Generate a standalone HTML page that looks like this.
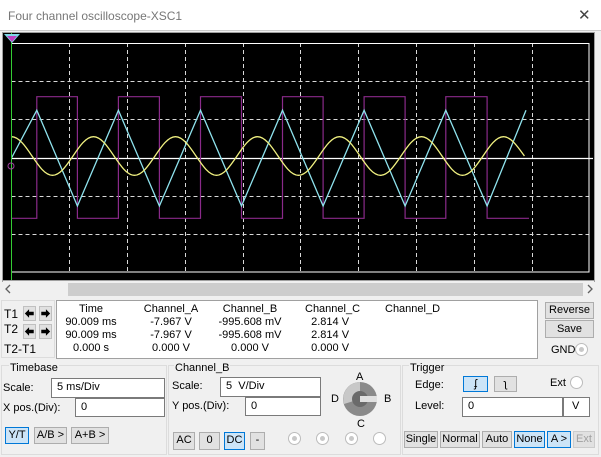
<!DOCTYPE html>
<html><head><meta charset="utf-8"><style>
*{margin:0;padding:0;box-sizing:border-box}
body{width:601px;height:457px;overflow:hidden;background:#f0f0f0;font-family:"Liberation Sans",sans-serif;font-size:11px;color:#000;position:relative}
.a{position:absolute;white-space:nowrap}
.in{position:absolute;background:#fff;border:1px solid #7a7a7a;padding:2px 0 0 5px;font-size:11px}
.bt{position:absolute;background:#e1e1e1;border:1px solid #adadad;text-align:center;font-size:11px;line-height:15px}
.bl{background:#cce4f7;border-color:#0078d7}
.grp{position:absolute;border:1px solid #dcdcdc}
.rd{position:absolute;width:13px;height:13px;border-radius:50%;border:1px solid #bcbcbc;background:#fff}
.rd.f::after{content:"";position:absolute;left:3px;top:3px;width:5px;height:5px;border-radius:50%;background:#c8c8c8}
.c{text-align:center}
.ar{position:absolute;background:#e1e1e1;border:1px solid #c0c0c0}
</style></head><body>
<div class="a" style="left:0;top:0;width:601px;height:31px;background:#fff;border-bottom:1px solid #ccc"></div>
<div class="a" style="left:8px;top:9px;font-size:12px;color:#777">Four channel oscilloscope-XSC1</div>
<div class="a" style="left:578px;top:6px;font-size:15px;color:#444">✕</div>
<svg class="a" style="left:0;top:31px" width="601" height="268" viewBox="0 31 601 268">
<rect x="2" y="32" width="593" height="250" fill="#a0a0a0"/>
<rect x="3" y="33" width="591" height="247" fill="#000"/>
<g stroke="#d8d8d8" stroke-width="1" stroke-dasharray="4,3">
<path d="M69.5,43V272M127.5,43V272M185.5,43V272M243.5,43V272M358.5,43V272M416.5,43V272M474.5,43V272M532.5,43V272"/>
<path d="M11.5,81.5H589M11.5,119.5H589M11.5,196.5H589M11.5,234.5H589"/>
<path d="M300.5,43V272"/>
</g>
<rect x="11.5" y="43.5" width="577.5" height="228.5" fill="none" stroke="#fff"/>
<path d="M11.5,158.5H593" stroke="#fff" stroke-width="1.2"/>
<path d="M11.5,218.3H36.8V96.7H77.4V218.3H118.4V96.7H159.4V218.3H200.5V96.7H241.5V218.3H282.5V96.7H323.1V218.3H364.1V96.7H405.1V218.3H445.8V96.7H487.1V218.3H529" fill="none" stroke="#8a2a8a" stroke-width="1.2"/>
<path d="M11.5,158L36.8,110.3L77.4,206L118.4,110.3L159.4,206L200.5,110.3L241.5,206L282.5,110.3L323.1,206L364.1,110.3L405.1,206L445.8,110.3L487.1,206L526,110.3" fill="none" stroke="#8fe3ee" stroke-width="1.3"/>
<path d="M11.5,136.7c14.9,0 26.1,38.6 41,38.6s26.1,-38.6 41,-38.6s26.1,38.6 41,38.6s26.1,-38.6 41,-38.6s26.1,38.6 41,38.6s26.1,-38.6 41,-38.6s26.1,38.6 41,38.6s26.1,-38.6 41,-38.6s26.1,38.6 41,38.6s26.1,-38.6 41,-38.6s26.1,38.6 41,38.6s26.1,-38.6 41,-38.6C511,136.7 518,147 524.4,156" fill="none" stroke="#f0f080" stroke-width="1.3"/>
<path d="M11.5,33V280" stroke="#3c3" stroke-width="1"/>
<path d="M4,34H20L12,43Z" fill="#7fd8e8"/><path d="M7,36H17L12,42Z" fill="#c040c0"/>
<circle cx="11" cy="166" r="3" fill="none" stroke="#a040a0"/>
<rect x="3" y="281" width="591" height="17" fill="#f0f0f0"/>
<rect x="68" y="283" width="515" height="13" fill="#cdcdcd"/>
<path d="M10,285l-4,4 4,4M588,285l4,4 -4,4" fill="none" stroke="#606060" stroke-width="1.3"/>
</svg>
<div class="grp" style="left:1px;top:300px;width:54px;height:58px"></div>
<div class="a" style="left:4px;top:307px;font-size:12px">T1</div>
<div class="a" style="left:4px;top:322px;font-size:12px">T2</div>
<div class="a" style="left:4px;top:342px;font-size:12px">T2-T1</div>
<svg class="ar" style="left:23px;top:306px" width="13" height="15" viewBox="0 0 13 15"><path d="M1,7.5L6,2.5V5.5H11.5V9.5H6V12.5Z" fill="#000"/></svg>
<svg class="ar" style="left:39px;top:306px" width="13" height="15" viewBox="0 0 13 15"><path d="M12,7.5L7,2.5V5.5H1.5V9.5H7V12.5Z" fill="#000"/></svg>
<svg class="ar" style="left:23px;top:324px" width="13" height="15" viewBox="0 0 13 15"><path d="M1,7.5L6,2.5V5.5H11.5V9.5H6V12.5Z" fill="#000"/></svg>
<svg class="ar" style="left:39px;top:324px" width="13" height="15" viewBox="0 0 13 15"><path d="M12,7.5L7,2.5V5.5H1.5V9.5H7V12.5Z" fill="#000"/></svg>
<div class="a" style="left:56px;top:300px;width:482px;height:59px;background:#fff;border:1px solid #a0a0a0"></div>
<div class="a c" style="left:56px;top:303px;width:70px;line-height:13px">Time<br>90.009 ms<br>90.009 ms<br>0.000 s</div>
<div class="a c" style="left:136px;top:303px;width:70px;line-height:13px">Channel_A<br>-7.967 V<br>-7.967 V<br>0.000 V</div>
<div class="a c" style="left:210px;top:303px;width:80px;line-height:13px">Channel_B<br>-995.608 mV<br>-995.608 mV<br>0.000 V</div>
<div class="a" style="left:305px;top:303px;line-height:13px">Channel_C<br>&nbsp;&nbsp;2.814 V<br>&nbsp;&nbsp;2.814 V<br>&nbsp;&nbsp;0.000 V</div>
<div class="a" style="left:385px;top:303px;line-height:13px">Channel_D</div>
<div class="bt" style="left:545px;top:302px;width:49px;height:17px">Reverse</div>
<div class="bt" style="left:545px;top:320px;width:49px;height:18px;line-height:16px">Save</div>
<div class="a" style="left:551px;top:344px">GND</div>
<div class="rd f" style="left:575px;top:343px"></div>
<div class="grp" style="left:1px;top:365px;width:166px;height:90px"></div>
<div class="a" style="left:9px;top:362px;background:#f0f0f0;padding:0 1px">Timebase</div>
<div class="a" style="left:3px;top:382px">Scale:</div>
<div class="in" style="left:51px;top:378px;width:114px;height:20px">5 ms/Div</div>
<div class="a" style="left:3px;top:402px">X pos.(Div):</div>
<div class="in" style="left:75px;top:398px;width:90px;height:19px">0</div>
<div class="bt bl" style="left:5px;top:427px;width:24px;height:17px">Y/T</div>
<div class="bt" style="left:34px;top:427px;width:33px;height:17px">A/B &gt;</div>
<div class="bt" style="left:71px;top:427px;width:38px;height:17px">A+B &gt;</div>
<div class="grp" style="left:168px;top:365px;width:233px;height:90px"></div>
<div class="a" style="left:174px;top:362px;background:#f0f0f0;padding:0 1px">Channel_B</div>
<div class="a" style="left:172px;top:380px">Scale:</div>
<div class="in" style="left:220px;top:377px;width:101px;height:20px">5&nbsp; V/Div</div>
<div class="a" style="left:172px;top:400px">Y pos.(Div):</div>
<div class="in" style="left:245px;top:397px;width:76px;height:19px">0</div>
<div class="a" style="left:356px;top:371px">A</div>
<div class="a" style="left:384px;top:393px">B</div>
<div class="a" style="left:357px;top:418px">C</div>
<div class="a" style="left:331px;top:393px">D</div>
<svg class="a" style="left:340px;top:380px" width="40" height="38"><circle cx="20" cy="19" r="17" fill="#8a8a8a"/><path d="M20,2A17,17 0 0 0 4,24L20,19Z" fill="#c8c8c8"/><circle cx="20" cy="19" r="8" fill="#6a6a6a"/><path d="M20,16H37V22H20Z" fill="#e0e0e0"/></svg>
<div class="bt" style="left:173px;top:432px;width:22px;height:18px">AC</div>
<div class="bt" style="left:199px;top:432px;width:21px;height:18px">0</div>
<div class="bt bl" style="left:224px;top:432px;width:21px;height:18px">DC</div>
<div class="bt" style="left:250px;top:432px;width:15px;height:18px">-</div>
<div class="rd f" style="left:288px;top:432px"></div>
<div class="rd f" style="left:316px;top:432px"></div>
<div class="rd f" style="left:345px;top:432px"></div>
<div class="rd" style="left:373px;top:432px"></div>
<div class="grp" style="left:402px;top:365px;width:197px;height:90px"></div>
<div class="a" style="left:409px;top:362px;background:#f0f0f0;padding:0 1px">Trigger</div>
<div class="a" style="left:415px;top:379px">Edge:</div>
<div class="bt bl" style="left:463px;top:376px;width:25px;height:16px">ʄ</div>
<div class="bt" style="left:494px;top:376px;width:23px;height:16px">ʅ</div>
<div class="a" style="left:550px;top:377px">Ext</div>
<div class="rd" style="left:570px;top:376px"></div>
<div class="a" style="left:415px;top:400px">Level:</div>
<div class="in" style="left:462px;top:397px;width:101px;height:20px">0</div>
<div class="in" style="left:563px;top:397px;width:27px;height:20px;padding-left:8px">V</div>
<div class="bt" style="left:404px;top:431px;width:34px;height:17px">Single</div>
<div class="bt" style="left:440px;top:431px;width:40px;height:17px">Normal</div>
<div class="bt" style="left:482px;top:431px;width:30px;height:17px">Auto</div>
<div class="bt bl" style="left:514px;top:431px;width:31px;height:17px">None</div>
<div class="bt bl" style="left:547px;top:431px;width:24px;height:17px">A &gt;</div>
<div class="bt" style="left:573px;top:431px;width:22px;height:17px;color:#a0a0a0;border-color:#ccc">Ext</div>
</body></html>
